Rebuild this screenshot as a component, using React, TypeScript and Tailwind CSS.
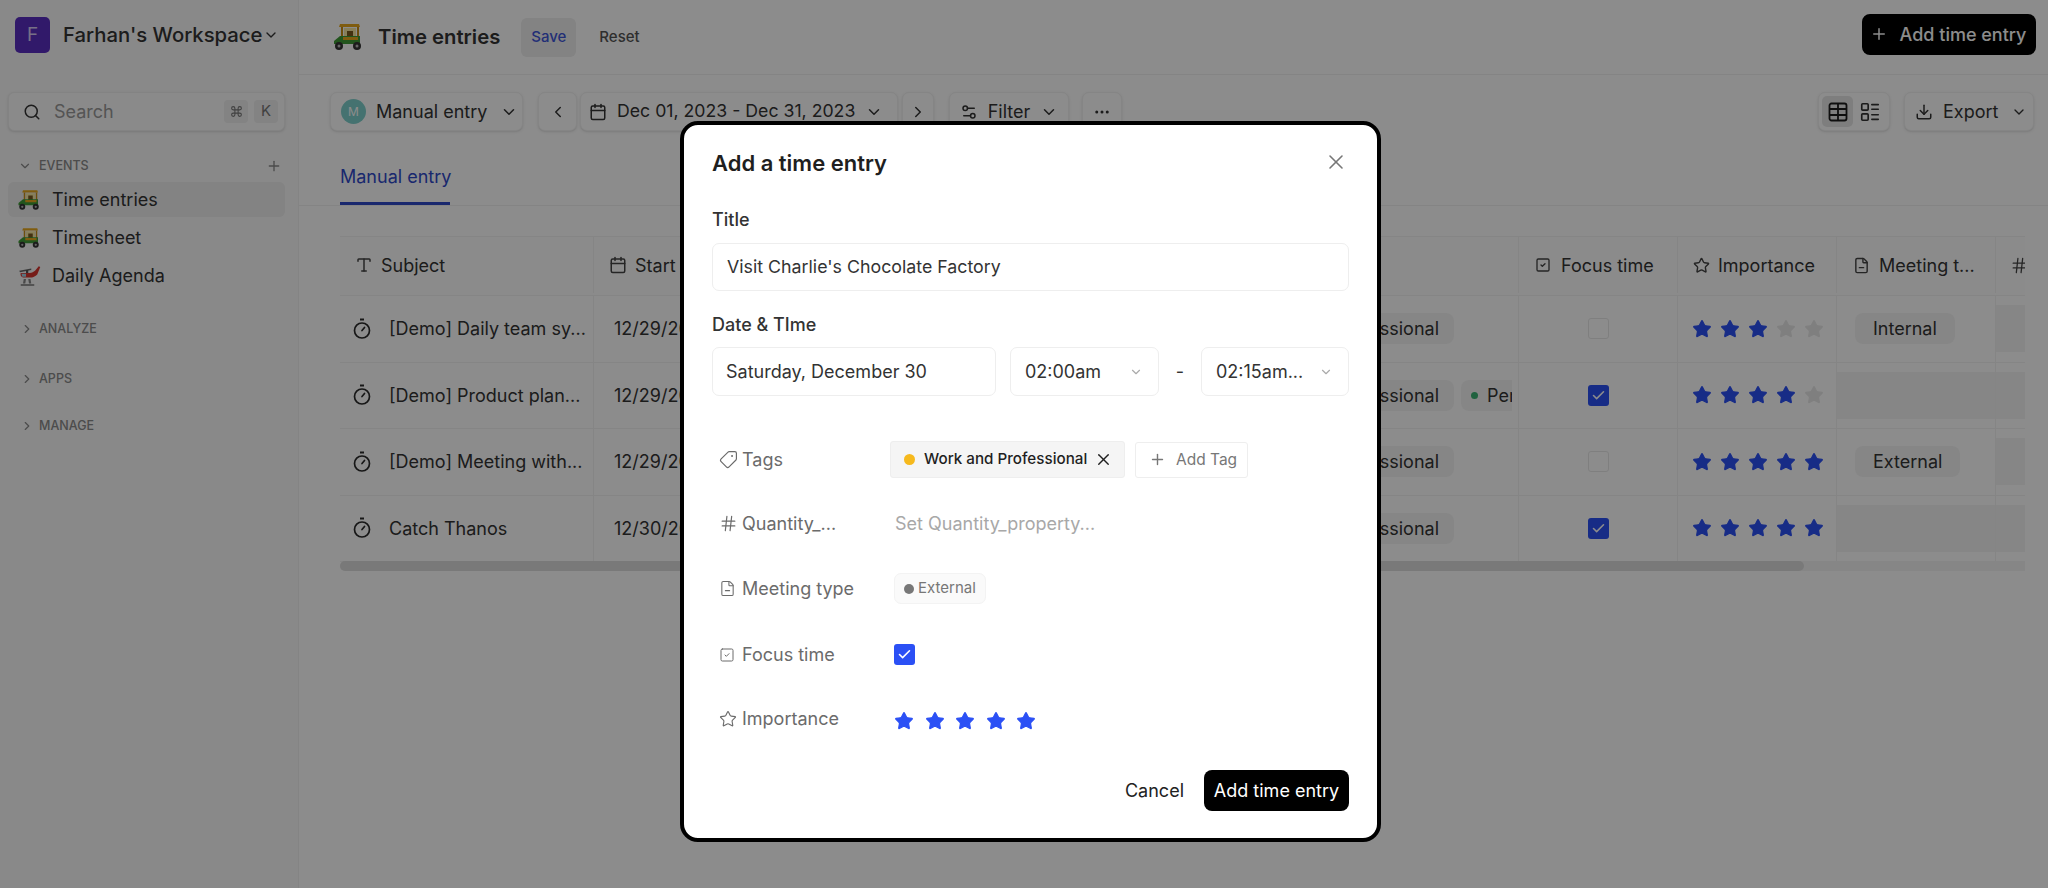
import { Calendar, Check, ChevronDown, ChevronLeft, ChevronRight, Command, Download, Ellipsis, Hash, Plus, Search, Settings2, SquareCheck, Star, Tag, Type, X, LayoutList, FileMinus } from 'lucide-react';

const Rickshaw = ({ size = 24 }: { size?: number }) => (
  <svg width={size} height={size} viewBox="0 0 32 32" className="shrink-0">
    <path d="M8 3h19l1 3H7z" fill="#e8a81c" />
    <path d="M9 6h2v10H9zM25 6h2v11h-2z" fill="#c98f14" />
    <path d="M12 7h12v8H12z" fill="#f8e7a0" />
    <path d="M15 10h6v6h-6z" fill="#7a5a20" />
    <path d="M2 20l6-5h20v8H2z" fill="#3f9b35" />
    <path d="M11 16h15v3H11z" fill="#e8a81c" />
    <circle cx="7" cy="25" r="4" fill="#333" />
    <circle cx="25" cy="25" r="4" fill="#333" />
    <circle cx="7" cy="25" r="1.5" fill="#bbb" />
    <circle cx="25" cy="25" r="1.5" fill="#bbb" />
  </svg>
);

const Helicopter = () => (
  <svg width={24} height={24} viewBox="0 0 32 32" className="shrink-0">
    <path d="M3 9l16-3v2L4 11z" fill="#666" />
    <path d="M12 8h3v4h-3z" fill="#555" />
    <path d="M5 12h12c3 0 5-2 7-3l5-6 2 1-4 10c-2 2-4 3-7 4H9c-3 0-5-3-4-6z" fill="#d8362f" />
    <path d="M6 13h6v4H7z" fill="#9fd3e8" />
    <path d="M9 20h3l-1 6H8zM15 20h3l1 6h-3z" fill="#888" />
    <path d="M5 27h18v2H5z" fill="#777" />
  </svg>
);

const Stopwatch = () => (
  <svg width={20} height={24} viewBox="0 0 20 24" fill="none" stroke="#2a2a2a" strokeWidth="1.7" className="shrink-0">
    <path d="M8 2.5h4" strokeWidth="2" />
    <circle cx="10" cy="13.5" r="7.5" />
    <path d="M10 13.5l2.5-3" strokeLinecap="round" />
  </svg>
);

const TableIcon = () => (
  <svg width={22} height={22} viewBox="0 0 22 22" fill="none" stroke="#1c1c1c" strokeWidth="1.8">
    <rect x="2.5" y="2.5" width="17" height="17" rx="2" />
    <path d="M2.5 8h17M2.5 14h17M11 2.5v17" />
  </svg>
);

const columnClass = 'flex items-center shrink-0 border-r border-[#f2f2f2] h-full';

const rows = [
  { subject: '[Demo] Daily team sy...', date: '12/29/2023', extra: false, checked: false, stars: 3, meeting: 'Internal' },
  { subject: '[Demo] Product plan...', date: '12/29/2023', extra: true, checked: true, stars: 4, meeting: '' },
  { subject: '[Demo] Meeting with...', date: '12/29/2023', extra: false, checked: false, stars: 5, meeting: 'External' },
  { subject: 'Catch Thanos', date: '12/30/2023', extra: false, checked: true, stars: 5, meeting: '' },
];

const Stars = ({ count, gap }: { count: number; gap: string }) => (
  <div className={`flex items-center ${gap}`}>
    {[0, 1, 2, 3, 4].map(i => (
      <Star key={i} size={20} strokeWidth={1.5} className={i < count ? 'fill-[#2b50f5] text-[#2b50f5]' : 'fill-[#e8e8e8] text-[#e8e8e8]'} />
    ))}
  </div>
);

const SideSection = ({ label, className }: { label: string; className: string }) => (
  <div className={`flex items-center pl-[20px] ${className}`}>
    <ChevronRight size={14} className="text-[#8a8a8a]" />
    <span className="ml-[5px] text-[12.5px] font-medium text-[#8a8a8a]">{label}</span>
  </div>
);

const FormRow = ({ icon, label, className, children }: { icon: React.ReactNode; label: string; className: string; children: React.ReactNode }) => (
  <div className={`flex items-center ${className}`}>
    <div className="flex items-center w-[178px] pl-[7px] shrink-0 text-[#6b6b6b] text-[18px]">
      <span className="w-[23px] flex items-center shrink-0">{icon}</span>
      {label}
    </div>
    {children}
  </div>
);

const toolButton = 'h-full rounded-[7px] border border-[#f2f2f2] bg-white shadow-sm flex items-center';

export default function App() {
  return (
    <div className="relative w-[2048px] h-[888px] overflow-hidden bg-white flex text-[#333333] font-['Inter',sans-serif]">
      <aside className="w-[299px] shrink-0 h-full bg-[#f9f9f9] border-r border-[#f1f1f1] flex flex-col">
        <div className="h-[74px] flex items-center pl-[15px] pb-[4px]">
          <div className="w-[35px] h-[36px] rounded-[5px] bg-[#5a2fc2] text-[#d9cdf5] flex items-center justify-center text-[19px]">F</div>
          <span className="ml-[13px] text-[20.3px] font-medium whitespace-nowrap">Farhan's Workspace</span>
          <ChevronDown size={16} className="ml-[1px]" />
        </div>
        <div className="mt-[18px] ml-[8px] mr-[13px] h-[39px] rounded-[6px] border border-[#eeeeee] bg-[#fbfbfb] shadow-sm flex items-center pl-[14px] pr-[6px]">
          <Search size={18} className="text-[#333]" />
          <span className="ml-[13px] text-[18px] text-[#999] flex-1">Search</span>
          <span className="w-[24px] h-[23px] rounded-[4px] bg-[#eeeeee] flex items-center justify-center text-[#777]"><Command size={13} /></span>
          <span className="ml-[6px] w-[24px] h-[23px] rounded-[4px] bg-[#eeeeee] flex items-center justify-center text-[#777] text-[15px]">K</span>
        </div>
        <div className="mt-[26px] h-[18px] flex items-center pl-[18px] pr-[16px]">
          <ChevronDown size={14} className="text-[#8a8a8a]" />
          <span className="ml-[7px] text-[12.5px] font-medium text-[#8a8a8a] flex-1">EVENTS</span>
          <Plus size={16} className="text-[#8a8a8a]" />
        </div>
        <div className="mt-[7px] ml-[8px] mr-[13px] h-[35px] rounded-[6px] bg-[#eeeeee] flex items-center pl-[9px] gap-[11px] text-[18px]">
          <Rickshaw />Time entries
        </div>
        <div className="mt-[3px] ml-[8px] mr-[13px] h-[35px] flex items-center pl-[9px] gap-[11px] text-[18px]">
          <Rickshaw />Timesheet
        </div>
        <div className="mt-[3px] ml-[8px] mr-[13px] h-[35px] flex items-center pl-[9px] gap-[11px] text-[18px]">
          <Helicopter />Daily Agenda
        </div>
        <SideSection label="ANALYZE" className="mt-[27px] h-[18px]" />
        <SideSection label="APPS" className="mt-[32px] h-[18px]" />
        <SideSection label="MANAGE" className="mt-[29px] h-[18px]" />
      </aside>

      <main className="flex-1 min-w-0 flex flex-col">
        <header className="h-[75px] shrink-0 border-b border-[#f0f0f0] flex items-center pl-[33px] pr-[12px]">
          <Rickshaw size={32} />
          <span className="ml-[14px] text-[20.3px] font-semibold">Time entries</span>
          <span className="ml-[21px] w-[55px] h-[39px] rounded-[6px] bg-[#eeeeee] flex items-center justify-center text-[15px] font-medium text-[#3f56d8]">Save</span>
          <span className="ml-[23px] text-[15px] font-medium text-[#555]">Reset</span>
          <button className="ml-auto w-[174px] h-[41px] mb-[6px] rounded-[8px] bg-black text-white flex items-center justify-center gap-[12px] text-[18px] font-medium pr-[2px]">
            <Plus size={18} />Add time entry
          </button>
        </header>

        <div className="mt-[17px] h-[39px] flex items-center pl-[31px] pr-[14px] text-[18px]">
          <div className={`${toolButton} w-[193px] pl-[10px] gap-[10px]`}>
            <span className="w-[25px] h-[25px] rounded-full bg-[#7fd0cc] text-white text-[12px] flex items-center justify-center">M</span>
            Manual entry
            <ChevronDown size={18} className="ml-[3px]" />
          </div>
          <div className={`${toolButton} ml-[15px] w-[39px] justify-center`}><ChevronLeft size={18} /></div>
          <div className={`${toolButton} ml-[3px] w-[318px] pl-[8px] gap-[10px] whitespace-nowrap text-[17.7px]`}>
            <Calendar size={18} />Dec 01, 2023 - Dec 31, 2023<ChevronDown size={18} />
          </div>
          <div className={`${toolButton} ml-[4px] w-[32px] justify-center`}><ChevronRight size={18} /></div>
          <div className={`${toolButton} ml-[15px] w-[120px] justify-center gap-[10px]`}>
            <Settings2 size={18} />Filter<ChevronDown size={18} />
          </div>
          <div className={`${toolButton} ml-[13px] w-[40px] justify-center`}><Ellipsis size={18} /></div>
          <div className={`${toolButton} ml-auto w-[72px] gap-[6px] pl-[3px]`}>
            <span className="w-[31px] h-[31px] rounded-[5px] bg-[#e6e6e6] flex items-center justify-center"><TableIcon /></span>
            <LayoutList size={22} strokeWidth={1.8} />
          </div>
          <div className={`${toolButton} ml-[14px] w-[130px] pl-[10px] gap-[10px]`}>
            <Download size={18} />Export<ChevronDown size={16} className="ml-[3px]" />
          </div>
        </div>

        <div className="mt-[26px] h-[49px] border-b border-[#f0f0f0] pl-[41px] flex">
          <span className="h-full w-[110px] border-b-[3px] border-[#2f49c9] text-[#2f49c9] text-[18px] pt-[6px] whitespace-nowrap">Manual entry</span>
        </div>

        <div className="mt-[30px] ml-[41px] w-[1685px] overflow-hidden text-[18px]">
          <div className="h-[60px] flex items-center border-y border-[#f2f2f2] bg-[#fdfdfd] pb-[2px]">
            <div className={`${columnClass} w-[254px] pl-[15px] gap-[8px]`}><Type size={18} className="text-[#444]" />Subject</div>
            <div className={`${columnClass} w-[925px] pl-[15px] gap-[8px]`}><Calendar size={18} className="text-[#444]" />Start</div>
            <div className={`${columnClass} w-[159px] pl-[16px] gap-[10px]`}><SquareCheck size={16} className="text-[#444]" />Focus time</div>
            <div className={`${columnClass} w-[159px] pl-[15px] gap-[8px]`}><Star size={17} className="text-[#444]" />Importance</div>
            <div className={`${columnClass} w-[159px] pl-[16px] gap-[9px]`}><FileMinus size={17} className="text-[#444]" />Meeting t...</div>
            <div className="pl-[14px] flex items-center"><Hash size={19} strokeWidth={1.6} className="text-[#444]" /></div>
          </div>
          {rows.map(row => (
            <div key={row.subject} className="h-[66.5px] flex items-center border-b border-[#f2f2f2]">
              <div className={`${columnClass} w-[254px] pl-[12px] gap-[17px] whitespace-nowrap`}><Stopwatch />{row.subject}</div>
              <div className={`${columnClass} w-[925px] pl-[20px] overflow-hidden`}>
                <span className="w-[570px] shrink-0">{row.date}</span>
                <span className="w-[270px] shrink-0 h-[31px] pr-[15px] rounded-[8px] bg-[#f5f5f5] flex items-center justify-end whitespace-nowrap">Work and Professional</span>
                {row.extra && <span className="ml-[7px] w-[51px] shrink-0 h-[31px] pl-[10px] rounded-l-[8px] bg-[#f5f5f5] flex items-center gap-[9px] overflow-hidden"><span className="w-[7px] h-[7px] shrink-0 rounded-full bg-[#3bb273]" />Personal</span>}
              </div>
              <div className={`${columnClass} w-[159px] justify-center`}>
                {row.checked
                  ? <span className="w-[21px] h-[21px] rounded-[3px] bg-[#2b50f5] flex items-center justify-center"><Check size={15} strokeWidth={2.5} className="text-white" /></span>
                  : <span className="w-[21px] h-[21px] rounded-[3px] border border-[#e8e8e8]" />}
              </div>
              <div className={`${columnClass} w-[159px] pl-[14px]`}>
                <Stars count={row.stars} gap="gap-[8px]" />
              </div>
              <div className={`${columnClass} w-[159px] ${row.meeting ? 'pl-[18px]' : ''}`}>
                {row.meeting
                  ? <span className="h-[31px] px-[18px] rounded-[8px] bg-[#f5f5f5] flex items-center">{row.meeting}</span>
                  : <span className="w-full h-[47px] bg-[#f5f5f5]" />}
              </div>
              <div className="flex-1 h-[47px] bg-[#f5f5f5]" />
            </div>
          ))}
          <div className="mt-[-1px] h-[10px] rounded-l-[5px] bg-[#f4f4f4]">
            <div className="w-[1464px] h-full rounded-[5px] bg-[#dddddd]" />
          </div>
        </div>
      </main>

      <div className="absolute inset-0 bg-black/45" />

      <div className="absolute left-[680px] top-[121px] w-[701px] h-[721px] rounded-[18px] border-[4px] border-black bg-white px-[28px] text-[#1f1f1f]">
        <div className="mt-[21px] h-[34px] flex items-center justify-between">
          <span className="text-[22px] font-semibold">Add a time entry</span>
          <X size={24} strokeWidth={1.6} className="text-[#777] mr-[1px] mb-[2px]" />
        </div>
        <div className="mt-[27px] h-[24px] flex items-center text-[18px] font-medium text-[#333]">Title</div>
        <div className="mt-[12px] h-[48px] rounded-[7px] border border-[#eeeeee] flex items-center pl-[14px] text-[17.8px] text-[#333]">Visit Charlie's Chocolate Factory</div>
        <div className="mt-[21px] h-[24px] flex items-center text-[18px] font-medium text-[#333]">Date &amp; TIme</div>
        <div className="mt-[11px] h-[49px] flex items-center text-[18px] text-[#333]">
          <div className="w-[284px] h-full rounded-[7px] border border-[#eeeeee] flex items-center pl-[13px]">Saturday, December 30</div>
          <div className="ml-[14px] w-[149px] h-full rounded-[7px] border border-[#eeeeee] flex items-center justify-between pl-[14px] pr-[15px]">02:00am<ChevronDown size={14} className="text-[#aaa]" /></div>
          <span className="w-[42px] text-center">-</span>
          <div className="w-[148px] h-full rounded-[7px] border border-[#eeeeee] flex items-center justify-between pl-[14px] pr-[15px]">02:15am...<ChevronDown size={14} className="text-[#aaa]" /></div>
        </div>
        <FormRow icon={<Tag size={19} strokeWidth={1.5} className="rotate-90" />} label="Tags" className="mt-[45px] h-[37px]">
          <div className="h-full w-[235px] rounded-[3px] border border-[#eeeeee] bg-[#f5f5f5] flex items-center pl-[13px] font-medium">
            <span className="w-[11px] h-[11px] rounded-full bg-[#f6b91d]" />
            <span className="ml-[9px] whitespace-nowrap text-[15.2px]">Work and Professional</span>
            <X size={19} strokeWidth={1.7} className="ml-[7px]" />
          </div>
          <div className="ml-[10px] h-[36px] w-[113px] rounded-[3px] border border-[#eeeeee] flex items-center pl-[13px] gap-[10px] text-[15.5px] text-[#777]">
            <Plus size={17} />Add Tag
          </div>
        </FormRow>
        <FormRow icon={<Hash size={19} strokeWidth={1.5} />} label="Quantity_..." className="mt-[27px] h-[37px]">
          <span className="ml-[5px] text-[18px] text-[#a8a8a8]">Set Quantity_property...</span>
        </FormRow>
        <FormRow icon={<FileMinus size={17} strokeWidth={1.5} />} label="Meeting type" className="mt-[28px] h-[37px]">
          <span className="ml-[4px] h-[31px] w-[92px] rounded-[7px] border border-[#f3f3f3] bg-[#fafafa] flex items-center pl-[9px] gap-[4px] text-[15px] text-[#777]">
            <span className="w-[10px] h-[10px] rounded-full bg-[#777]" />External
          </span>
        </FormRow>
        <FormRow icon={<SquareCheck size={16} strokeWidth={1.5} />} label="Focus time" className="mt-[29px] h-[37px]">
          <span className="ml-[4px] w-[21px] h-[21px] rounded-[3px] bg-[#2b50f5] flex items-center justify-center"><Check size={15} strokeWidth={2.5} className="text-white" /></span>
        </FormRow>
        <FormRow icon={<Star size={18} strokeWidth={1.5} />} label="Importance" className="mt-[27px] h-[37px]">
          <div className="ml-[4px] mt-[4px]"><Stars count={5} gap="gap-[10.5px]" /></div>
        </FormRow>
        <div className="mt-[33px] h-[41px] flex items-center justify-end text-[18px]">
          <span className="text-[#222]">Cancel</span>
          <button className="ml-[20px] w-[145px] h-full rounded-[8px] bg-black text-white flex items-center justify-center">Add time entry</button>
        </div>
      </div>
    </div>
  );
}
